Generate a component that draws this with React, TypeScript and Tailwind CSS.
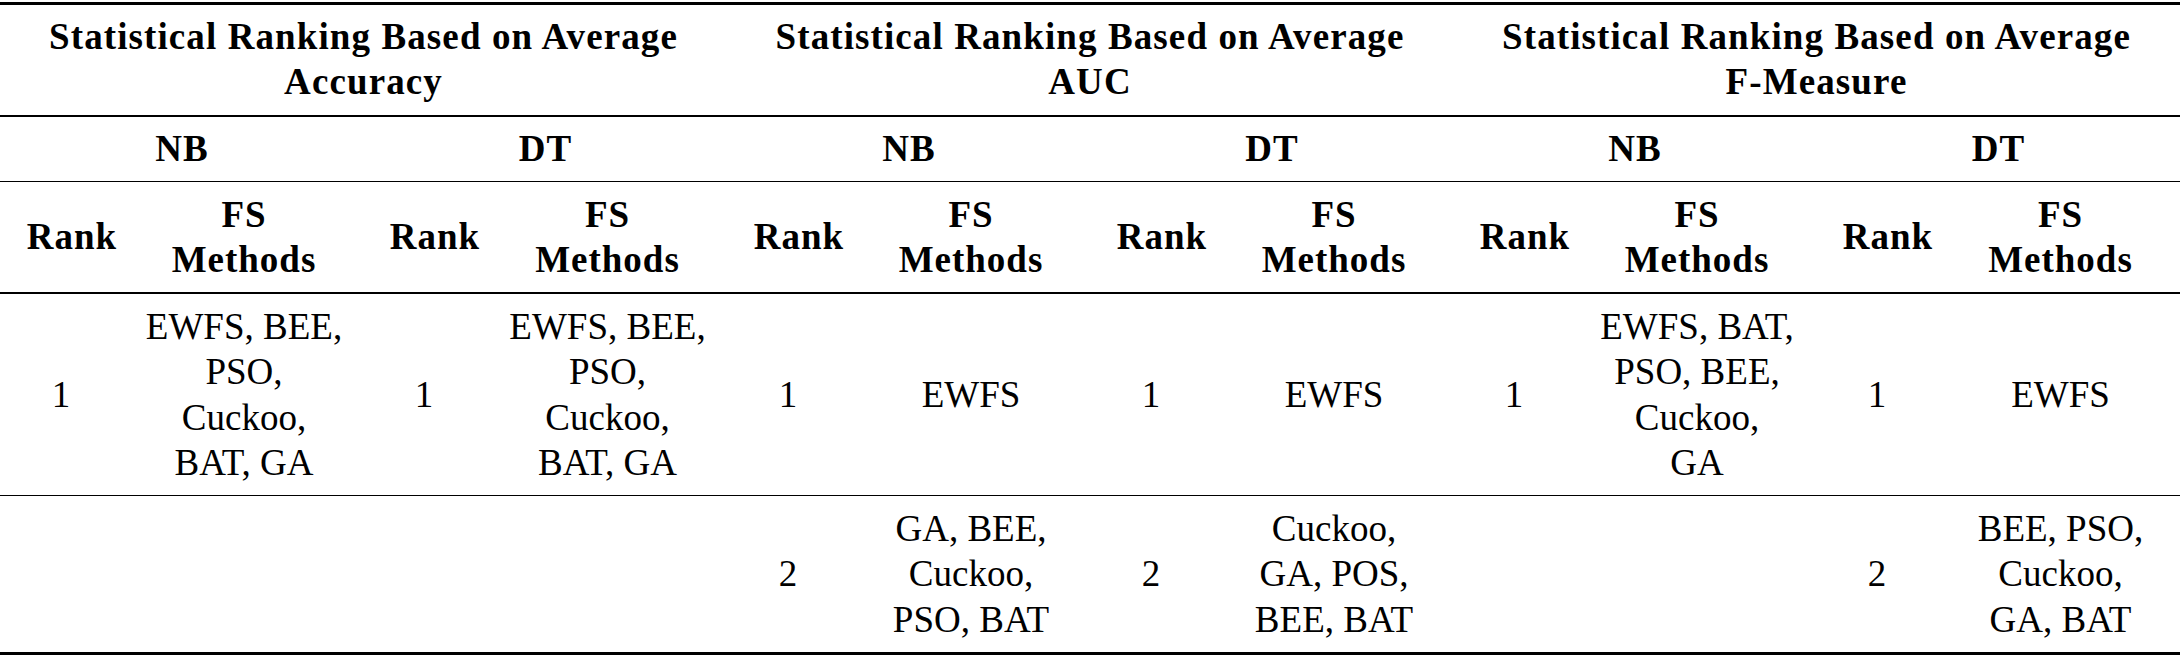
const cols =
  "grid grid-cols-[144px_220px_142px_221px_144px_220px_142px_220px_144px_220px_142px_221px]";

type Pair = { rank: string; fs: string[] };
type Group = { nb: Pair; dt: Pair };

const titles = ["Accuracy", "AUC", "F-Measure"];

const row1: Group[] = [
  {
    nb: { rank: "1", fs: ["EWFS, BEE,", "PSO,", "Cuckoo,", "BAT, GA"] },
    dt: { rank: "1", fs: ["EWFS, BEE,", "PSO,", "Cuckoo,", "BAT, GA"] },
  },
  {
    nb: { rank: "1", fs: ["EWFS"] },
    dt: { rank: "1", fs: ["EWFS"] },
  },
  {
    nb: { rank: "1", fs: ["EWFS, BAT,", "PSO, BEE,", "Cuckoo,", "GA"] },
    dt: { rank: "1", fs: ["EWFS"] },
  },
];

const row2: Group[] = [
  { nb: { rank: "", fs: [] }, dt: { rank: "", fs: [] } },
  {
    nb: { rank: "2", fs: ["GA, BEE,", "Cuckoo,", "PSO, BAT"] },
    dt: { rank: "2", fs: ["Cuckoo,", "GA, POS,", "BEE, BAT"] },
  },
  {
    nb: { rank: "", fs: [] },
    dt: { rank: "2", fs: ["BEE, PSO,", "Cuckoo,", "GA, BAT"] },
  },
];

function Lines({ lines }: { lines: string[] }) {
  return (
    <span className="whitespace-nowrap">
      {lines.map((l, i) => (
        <span key={i}>
          {i > 0 && <br />}
          {l}
        </span>
      ))}
    </span>
  );
}

function DataRow({ groups, className }: { groups: Group[]; className: string }) {
  return (
    <div className={`${cols} ${className}`}>
      {groups.map((g, gi) =>
        [g.nb, g.dt].map((p, pi) => [
          <div key={`r${gi}${pi}`} className="flex items-center justify-center pr-[22px]">
            {p.rank}
          </div>,
          <div
            key={`f${gi}${pi}`}
            className={`flex items-center justify-center text-center ${pi === 0 ? "pr-[20px]" : "pr-[18px]"}`}
          >
            <Lines lines={p.fs} />
          </div>,
        ])
      )}
    </div>
  );
}

export default function App() {
  return (
    <div className="w-[2180px] h-[656px] bg-white pt-[2px] text-black font-['Liberation_Serif',serif] text-[37px] leading-[45.5px]">
      <div className="border-t-[3px] border-black">
        {/* titles */}
        <div className={`${cols} h-[112px] border-b-2 border-black font-bold tracking-[1.1px]`}>
          {titles.map((t) => (
            <div key={t} className="col-span-4 flex items-center justify-center text-center leading-[45px] pb-[2px]">
              <span className="whitespace-nowrap">
                Statistical Ranking Based on Average
                <br />
                {t}
              </span>
            </div>
          ))}
        </div>

        {/* classifiers */}
        <div className={`${cols} h-[65px] border-b border-black font-bold tracking-[1px]`}>
          {titles.map((t) => [
            <div key={t + "nb"} className="col-span-2 flex items-center justify-center">
              NB
            </div>,
            <div key={t + "dt"} className="col-span-2 flex items-center justify-center">
              DT
            </div>,
          ])}
        </div>

        {/* column headers */}
        <div className={`${cols} h-[112px] border-b-2 border-black font-bold tracking-[1px]`}>
          {titles.map((t) =>
            [0, 1].map((pi) => [
              <div key={`${t}r${pi}`} className="flex items-center justify-center">
                Rank
              </div>,
              <div
                key={`${t}f${pi}`}
                className={`flex items-center justify-center text-center ${pi === 0 ? "pr-[20px]" : "pr-[18px]"}`}
              >
                <span>
                  FS
                  <br />
                  Methods
                </span>
              </div>,
            ])
          )}
        </div>

        <DataRow groups={row1} className="h-[202px] border-b border-black" />
        <DataRow groups={row2} className="h-[159px] border-b-[3px] border-black" />
      </div>
    </div>
  );
}
